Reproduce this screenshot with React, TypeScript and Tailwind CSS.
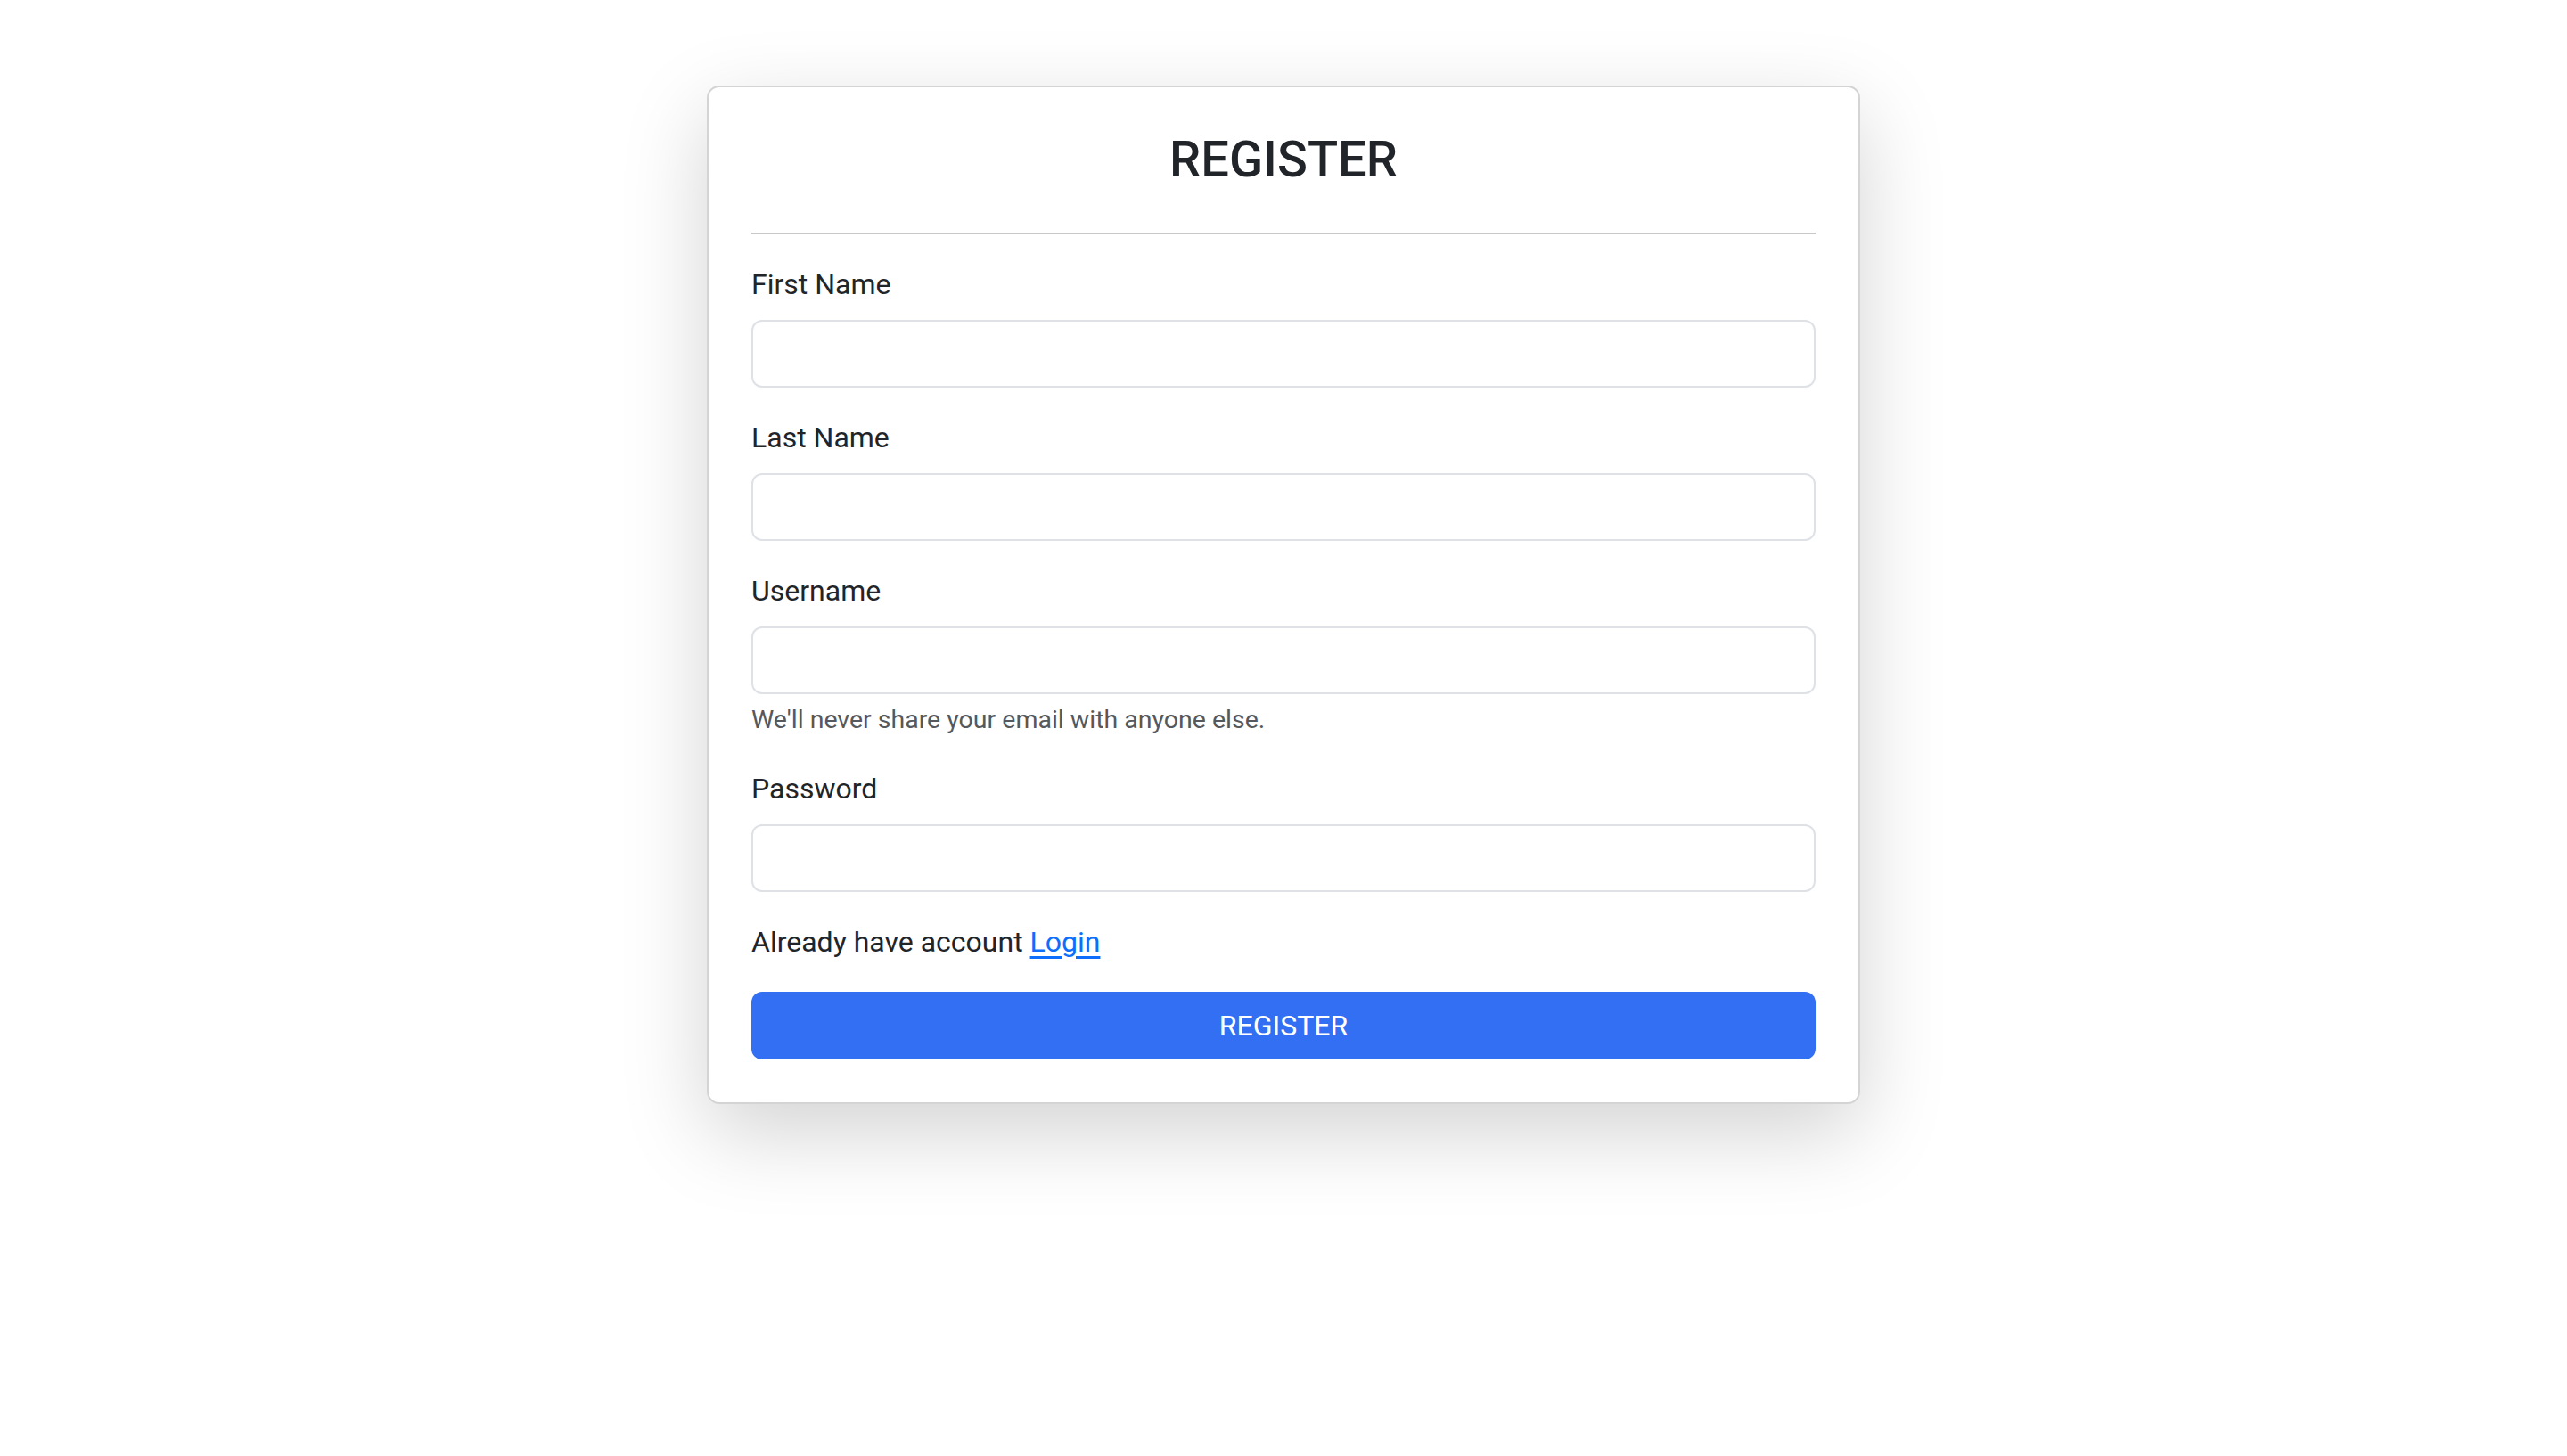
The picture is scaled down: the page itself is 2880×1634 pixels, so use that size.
import React from 'react';

const fields = [
  { id: 'firstName', label: 'First Name', type: 'text' },
  { id: 'lastName', label: 'Last Name', type: 'text' },
  { id: 'username', label: 'Username', type: 'text', help: "We'll never share your email with anyone else." },
  { id: 'password', label: 'Password', type: 'password' },
];

export default function App() {
  return (
    <div className="min-h-screen bg-white pt-[96px] flex justify-center font-['Roboto','Liberation_Sans',sans-serif] text-[#212529]">
      <div className="w-[1294px] self-start rounded-[14px] border-2 border-[#d4d4d4] bg-white p-[48px] shadow-[0_32px_96px_rgba(0,0,0,0.175)]">
        <h3 className="text-center text-[56px] leading-[67px] font-medium">REGISTER</h3>
        <hr className="mt-[48px] mb-[32px] border-0 border-t-2 border-[#c8c8c8]" />
        <form onSubmit={(e) => e.preventDefault()}>
          {fields.map((f) => (
            <div key={f.id} className="mb-[32px]">
              <label htmlFor={f.id} className="block text-[32px] leading-[48px] mb-[16px]">
                {f.label}
              </label>
              <input
                id={f.id}
                type={f.type}
                className="block w-full h-[76px] rounded-[12px] border-2 border-[#dee2e6] bg-white px-[24px] text-[32px] outline-none"
              />
              {f.help && (
                <div className="mt-[8px] text-[28.5px] leading-[42px] text-[#55595d]">{f.help}</div>
              )}
            </div>
          ))}
          <p className="text-[32px] leading-[48px] mb-[32px]">
            Already have account{' '}
            <a href="#" className="text-[#0d6efd] underline underline-offset-[5px]">
              Login
            </a>
          </p>
          <button
            type="submit"
            className="block w-full h-[76px] rounded-[12px] bg-[#336ff2] text-white text-[32px] leading-[48px]"
          >
            REGISTER
          </button>
        </form>
      </div>
    </div>
  );
}
